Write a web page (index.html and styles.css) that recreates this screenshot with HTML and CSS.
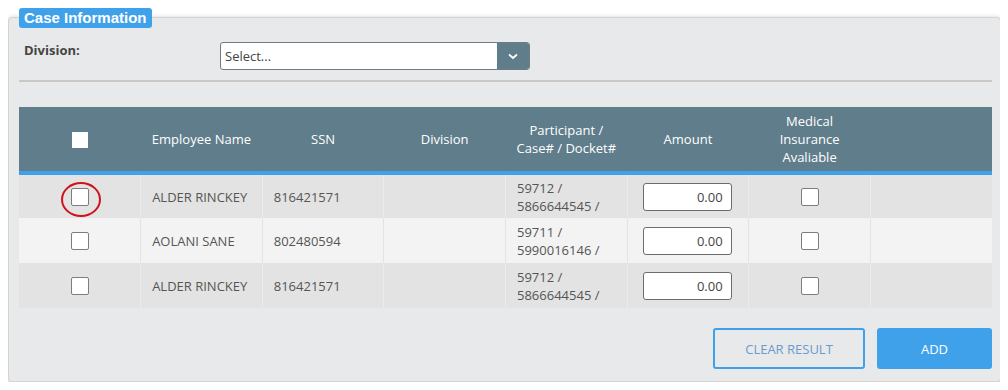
FILE: index.html
```html
<!DOCTYPE html>
<html lang="en">
<head>
    <meta charset="UTF-8">
    <meta name="viewport" content="width=device-width, initial-scale=1.0">
    <title>Case Information</title>
    <link rel="stylesheet" href="styles.css">
</head>
<body>
    <div class="panel">
        <h3 class="legend">Case Information</h3>
        <div class="filter">
            <label class="filter-label">Division:</label>
            <div class="select">
                <span class="select-text">Select...</span>
                <span class="select-btn">
                    <svg width="10" height="7" viewBox="0 0 10 7"><path d="M1 1.5 L5 5 L9 1.5" fill="none" stroke="#fff" stroke-width="1.8"/></svg>
                </span>
            </div>
        </div>
        <div class="divider"></div>
        <table class="grid">
            <thead>
                <tr>
                    <th><span class="head-check"></span></th>
                    <th>Employee Name</th>
                    <th>SSN</th>
                    <th>Division</th>
                    <th>Participant /<br>Case# / Docket#</th>
                    <th>Amount</th>
                    <th>Medical<br>Insurance<br>Avaliable</th>
                    <th></th>
                </tr>
            </thead>
            <tbody>
                <tr>
                    <td class="center"><span class="check marked"></span></td>
                    <td>ALDER RINCKEY</td>
                    <td>816421571</td>
                    <td></td>
                    <td>59712 /<br>5866644545 /</td>
                    <td class="amount"><span class="amount-box">0.00</span></td>
                    <td class="center"><span class="check"></span></td>
                    <td></td>
                </tr>
                <tr>
                    <td class="center"><span class="check"></span></td>
                    <td>AOLANI SANE</td>
                    <td>802480594</td>
                    <td></td>
                    <td>59711 /<br>5990016146 /</td>
                    <td class="amount"><span class="amount-box">0.00</span></td>
                    <td class="center"><span class="check"></span></td>
                    <td></td>
                </tr>
                <tr>
                    <td class="center"><span class="check"></span></td>
                    <td>ALDER RINCKEY</td>
                    <td>816421571</td>
                    <td></td>
                    <td>59712 /<br>5866644545 /</td>
                    <td class="amount"><span class="amount-box">0.00</span></td>
                    <td class="center"><span class="check"></span></td>
                    <td></td>
                </tr>
            </tbody>
        </table>
        <div class="actions">
            <button class="btn btn-outline">CLEAR RESULT</button>
            <button class="btn btn-fill">ADD</button>
        </div>
    </div>
</body>
</html>
```

FILE: styles.css
```css
* { margin: 0; padding: 0; box-sizing: border-box; }
body {
    margin: 8px;
    background: #fff;
    font-family: "Open Sans", sans-serif;
    font-size: 13px;
    color: #555;
}
.panel {
    width: 993px;
    height: 365px;
    margin-top: 9px;
    border: 1px solid #d3d3d3;
    border-radius: 4px;
    background: #e8e9ea;
    box-shadow: 0 1px 5px rgba(0, 0, 0, 0.25);
    padding: 0 8px 0 10px;
}
/* 테두리 위에 걸쳐지는 제목 */
.legend {
    width: fit-content;
    margin-top: -10px;
    background: #3fa1ea;
    color: #fff;
    font-family: "Liberation Sans", sans-serif;
    font-weight: bold;
    font-size: 15px;
    line-height: 20px;
    padding: 0 5px;
    border-radius: 3px;
}
.filter {
    display: flex;
    align-items: flex-start;
    margin-top: 14px;
}
.filter-label {
    width: 201px;
    padding-left: 5px;
    font-weight: bold;
    color: #444;
    line-height: 16px;
}
.select {
    width: 310px;
    height: 28px;
    display: flex;
    border: 1px solid #6f7c83;
    border-radius: 3px;
    background: #fff;
    overflow: hidden;
}
.select-text {
    flex: 1;
    padding-left: 4px;
    line-height: 26px;
    color: #444;
}
.select-btn {
    width: 32px;
    background: #607d8b;
    display: flex;
    align-items: center;
    justify-content: center;
}
.divider {
    height: 2px;
    background: #cbc7c2;
    margin-top: 10px;
}
.grid {
    width: 100%;
    margin-top: 25px;
    border-collapse: collapse;
    table-layout: fixed;
}
.grid th {
    background: #607d8b;
    color: #fff;
    font-weight: normal;
    height: 66px;
    line-height: 18px;
    border-bottom: 4px solid #3fa1ea;
    text-align: center;
}
.grid td {
    height: 45px;
    line-height: 18px;
    padding: 0 11px;
    border-left: 1px solid #ececec;
}
.grid td:first-child { border-left: 0; }
.grid tbody tr:nth-child(odd) td { background: #e3e3e3; }
.grid tbody tr:nth-child(even) td { background: #f3f3f3; border-left-color: #e3e3e3; }
.grid .center { text-align: center; }
.head-check {
    display: inline-block;
    width: 16px;
    height: 16px;
    background: #fff;
    vertical-align: middle;
}
.check {
    display: inline-block;
    width: 18px;
    height: 18px;
    border: 1px solid #7d7d7d;
    border-radius: 2px;
    background: #fff;
    vertical-align: middle;
    position: relative;
}
/* 빨간 동그라미 표시 */
.check.marked::after {
    content: "";
    position: absolute;
    left: -11px;
    top: -7px;
    width: 36px;
    height: 31px;
    border: 2px solid #d0121b;
    border-radius: 50%;
}
.grid td.amount { padding-left: 15px; }
.amount-box {
    display: block;
    width: 89px;
    height: 28px;
    border: 1px solid #6c6c6c;
    border-radius: 3px;
    background: #fff;
    text-align: right;
    padding-right: 8px;
    line-height: 26px;
    color: #444;
}
.actions {
    display: flex;
    justify-content: flex-end;
    gap: 12px;
    margin-top: 20px;
}
.btn {
    height: 41px;
    font-family: "Open Sans", sans-serif;
    font-size: 13px;
    border-radius: 3px;
}
.btn-outline {
    width: 152px;
    border: 2px solid #3fa1ea;
    background: transparent;
    color: #6a9bd0;
}
.btn-fill {
    width: 115px;
    border: 0;
    background: #3fa1ea;
    color: #fff;
}
```
